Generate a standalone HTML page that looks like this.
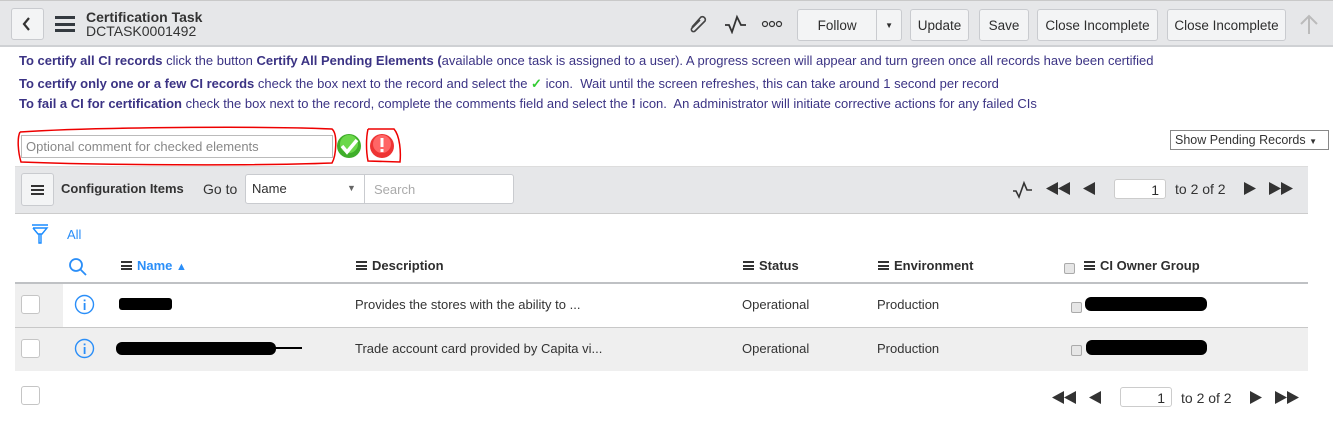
<!DOCTYPE html>
<html><head><meta charset="utf-8"><style>
*{box-sizing:border-box;margin:0;padding:0}
body{width:1333px;height:434px;background:#fff;font-family:"Liberation Sans",sans-serif;font-size:13px;color:#2e2e2e;position:relative;overflow:hidden}
.a{position:absolute;white-space:nowrap}
.btn{position:absolute;top:9px;height:32px;border:1px solid #c9cbcf;border-radius:3px;background:#f3f4f5;font-size:13.5px;color:#2e2e2e;display:flex;align-items:center;justify-content:center;white-space:nowrap}
.ins{position:absolute;left:19px;font-size:13px;color:#3b3384;white-space:nowrap}
.ins b{color:#3b3384}
.hd{position:absolute;top:258px;font-size:13px;font-weight:bold;color:#2e2e2e;white-space:nowrap}
.ham{display:inline-block;width:11px;height:9px;border-top:2px solid #333;border-bottom:2px solid #333;position:relative;margin-right:5px;vertical-align:0}
.ham:after{content:"";position:absolute;left:0;right:0;top:1.5px;border-top:2px solid #333}
.cb{position:absolute;width:19px;height:19px;border:1px solid #c5c5c5;border-radius:3px;background:#fff}
.scb{position:absolute;width:11px;height:11px;border:1px solid #aaa;border-radius:2px;background:#e6e6e6}
.scrib{position:absolute;background:#000;border-radius:6px}
.cell{position:absolute;font-size:13px;color:#333;white-space:nowrap}
</style></head><body>
<div class="a" style="left:0;top:0;width:1333px;height:47px;background:#e6e7e9;border-top:1px solid #c9c9c9;border-bottom:2px solid #cfd1d4"></div>
<div class="a" style="left:11px;top:8px;width:33px;height:32px;border:1px solid #c9cbcf;border-radius:3px;background:#f3f4f5"></div>
<svg class="a" style="left:22px;top:16px" width="10" height="16"><path d="M7 2 L2 8 L7 14" stroke="#333" stroke-width="2.2" fill="none"/></svg>
<div class="a" style="left:55px;top:16px;width:20px;height:16px;border-top:3px solid #343a40;border-bottom:3px solid #343a40"><div style="margin-top:3.5px;border-top:3px solid #343a40"></div></div>
<div class="a" style="left:86px;top:9px;font-size:14px;font-weight:bold;color:#333">Certification Task</div>
<div class="a" style="left:86px;top:23px;font-size:14px;color:#333">DCTASK0001492</div>
<svg class="a" style="left:686px;top:12px" width="24" height="24"><path d="M6 15 L15 5 a3 3 0 0 1 4 4 L9 19 a2 2 0 0 1 -3 -3 L14 8" stroke="#444" stroke-width="1.6" fill="none"/></svg>
<svg class="a" style="left:724px;top:14px" width="24" height="20"><path d="M1 11 L5 11 L8 18 L13 3 L17 11 L22 11" stroke="#333" stroke-width="1.8" fill="none"/></svg>
<svg class="a" style="left:761px;top:20px" width="22" height="8"><circle cx="4" cy="4" r="2.5" stroke="#333" stroke-width="1.2" fill="none"/><circle cx="11" cy="4" r="2.5" stroke="#333" stroke-width="1.2" fill="none"/><circle cx="18" cy="4" r="2.5" stroke="#333" stroke-width="1.2" fill="none"/></svg>
<div class="btn" style="left:797px;width:105px;justify-content:flex-start"><span style="width:79px;text-align:center">Follow</span><span style="border-left:1px solid #c9cbcf;height:30px;width:25px;display:flex;align-items:center;justify-content:center;font-size:8px">▼</span></div>
<div class="btn" style="left:910px;width:59px">Update</div>
<div class="btn" style="left:979px;width:50px">Save</div>
<div class="btn" style="left:1037px;width:121px">Close Incomplete</div>
<div class="btn" style="left:1167px;width:119px">Close Incomplete</div>
<svg class="a" style="left:1298px;top:13px" width="22" height="22"><path d="M11 21 L11 3 M3 11 L11 3 L19 11" stroke="#bbb" stroke-width="2" fill="none"/></svg>

<div class="ins" style="top:53px"><b>To certify all CI records</b> click the button <b>Certify All Pending Elements (</b>available once task is assigned to a user). A progress screen will appear and turn green once all records have been certified</div>
<div class="ins" style="top:76px"><b>To certify only one or a few CI records</b> check the box next to the record and select the <span style="color:#3c3;font-weight:bold">✓</span> icon.&nbsp; Wait until the screen refreshes, this can take around 1 second per record</div>
<div class="ins" style="top:96px"><b>To fail a CI for certification</b> check the box next to the record, complete the comments field and select the <b>!</b> icon.&nbsp; An administrator will initiate corrective actions for any failed CIs</div>

<div class="a" style="left:21px;top:135px;width:312px;height:23px;border:1px solid #bbb;font-size:13px;color:#888;padding:3px 4px">Optional comment for checked elements</div>
<svg class="a" style="left:14px;top:124px" width="325" height="42"><path d="M6 8 C80 3 250 2 318 5 C324 10 322 32 318 39 C240 42 80 41 7 38 C4 28 3 14 6 8" stroke="#e00" stroke-width="1.5" fill="none"/></svg>
<svg class="a" style="left:336px;top:133px" width="28" height="28"><circle cx="13" cy="13" r="12" fill="#3fae2a"/><circle cx="13" cy="11" r="9" fill="#6bd84a"/><path d="M6 13 L11 19 L21 7" stroke="#fff" stroke-width="3.5" fill="none"/></svg>
<svg class="a" style="left:364px;top:126px" width="45" height="38"><path d="M4 3 L30 3 C36 10 37 26 36 36 L4 35 C2 25 2 12 4 3" stroke="#e00" stroke-width="1.5" fill="none"/><circle cx="18" cy="20" r="12" fill="#e33"/><circle cx="18" cy="18" r="9" fill="#f66"/><rect x="16.5" y="12" width="3" height="9" fill="#fff"/><rect x="16.5" y="23" width="3" height="3" fill="#fff"/></svg>

<div class="a" style="left:1170px;top:130px;width:159px;height:20px;border:1px solid #888;font-size:12.5px;padding:2px 4px;color:#333;overflow:hidden">Show Pending Records <span style="font-size:8px">▼</span></div>

<div class="a" style="left:15px;top:166px;width:1293px;height:48px;background:#e6e7e9;border-top:1px solid #ddd;border-bottom:1px solid #ccc"></div>
<div class="a" style="left:21px;top:173px;width:33px;height:33px;border:1px solid #c9cbcf;border-radius:3px;background:#f3f4f5"></div>
<div class="a" style="left:31px;top:185px;width:13px;height:10px;border-top:2px solid #333;border-bottom:2px solid #333"><div style="margin-top:2px;border-top:2px solid #333"></div></div>
<div class="a" style="left:61px;top:181px;font-size:13px;font-weight:bold;color:#333">Configuration Items</div>
<div class="a" style="left:203px;top:181px;font-size:14px;color:#333">Go to</div>
<div class="a" style="left:245px;top:174px;width:269px;height:30px;border:1px solid #c9cbcf;border-radius:3px;background:#fff"></div>
<div class="a" style="left:364px;top:175px;width:1px;height:28px;background:#c9cbcf"></div>
<div class="a" style="left:252px;top:181px;font-size:13px">Name</div>
<div class="a" style="left:347px;top:183px;font-size:9px;color:#666">▼</div>
<div class="a" style="left:374px;top:182px;font-size:13px;color:#aaa">Search</div>
<svg class="a" style="left:1012px;top:180px" width="22" height="20"><path d="M1 11 L4 11 L7 17 L12 3 L15 10 L20 10" stroke="#333" stroke-width="1.6" fill="none"/></svg>
<svg class="a" style="left:1046px;top:182px" width="26" height="13"><path d="M0 6.5 L12 0 L12 13Z M12 6.5 L24 0 L24 13Z" fill="#333"/></svg>
<svg class="a" style="left:1083px;top:182px" width="13" height="13"><path d="M0 6.5 L12 0 L12 13Z" fill="#333"/></svg>
<div class="a" style="left:1114px;top:179px;width:52px;height:20px;border:1px solid #ccc;border-radius:3px;background:#fff;text-align:right;padding:2px 6px;font-size:14px">1</div>
<div class="a" style="left:1175px;top:181px;font-size:14px;color:#333">to 2 of 2</div>
<svg class="a" style="left:1244px;top:182px" width="13" height="13"><path d="M12 6.5 L0 0 L0 13Z" fill="#333"/></svg>
<svg class="a" style="left:1269px;top:182px" width="26" height="13"><path d="M12 6.5 L0 0 L0 13Z M24 6.5 L12 0 L12 13Z" fill="#333"/></svg>

<svg class="a" style="left:31px;top:223px" width="18" height="22"><path d="M1 2 L17 2 M2 5 L16 5 L11 11 L7 11 L2 5 M8 11 L8 20 L10 20 L10 11" stroke="#1a8cff" stroke-width="1.4" fill="none"/></svg>
<div class="a" style="left:67px;top:227px;font-size:13px;color:#2a8ef8">All</div>

<svg class="a" style="left:68px;top:257px" width="20" height="20"><circle cx="8" cy="8" r="6" stroke="#2a8ef8" stroke-width="1.8" fill="none"/><path d="M12 12 L18 18" stroke="#2a8ef8" stroke-width="1.8"/></svg>
<div class="hd" style="left:121px;color:#2a8ef8"><span class="ham"></span>Name <span style="font-size:11px">▲</span></div>
<div class="hd" style="left:356px"><span class="ham"></span>Description</div>
<div class="hd" style="left:743px"><span class="ham"></span>Status</div>
<div class="hd" style="left:878px"><span class="ham"></span>Environment</div>
<div class="scb" style="left:1064px;top:263px"></div>
<div class="hd" style="left:1084px"><span class="ham"></span>CI Owner Group</div>
<div class="a" style="left:15px;top:282px;width:1293px;height:2px;background:#bfc1c4"></div>

<div class="a" style="left:15px;top:284px;width:48px;height:43px;background:#efefef"></div>
<div class="a" style="left:15px;top:327px;width:1293px;height:1px;background:#c8c8c8"></div>
<div class="a" style="left:15px;top:328px;width:1293px;height:43px;background:#efefef"></div>
<div class="cb" style="left:21px;top:295px"></div>
<div class="cb" style="left:21px;top:339px"></div>
<svg class="a" style="left:74px;top:294px" width="21" height="21"><circle cx="10.5" cy="10.5" r="9" stroke="#2a8ef8" stroke-width="1.4" fill="none"/><rect x="9.7" y="9" width="1.8" height="7" fill="#2a8ef8"/><rect x="9.7" y="5.5" width="1.8" height="1.8" fill="#2a8ef8"/></svg>
<svg class="a" style="left:74px;top:338px" width="21" height="21"><circle cx="10.5" cy="10.5" r="9" stroke="#2a8ef8" stroke-width="1.4" fill="none"/><rect x="9.7" y="9" width="1.8" height="7" fill="#2a8ef8"/><rect x="9.7" y="5.5" width="1.8" height="1.8" fill="#2a8ef8"/></svg>
<div class="scrib" style="left:119px;top:298px;width:53px;height:12px;border-radius:3px"></div>
<div class="scrib" style="left:116px;top:342px;width:160px;height:13px"></div>
<div class="a" style="left:270px;top:347px;width:32px;height:2px;background:#000"></div>
<div class="cell" style="left:355px;top:297px">Provides the stores with the ability to ...</div>
<div class="cell" style="left:355px;top:341px">Trade account card provided by Capita vi...</div>
<div class="cell" style="left:742px;top:297px">Operational</div>
<div class="cell" style="left:742px;top:341px">Operational</div>
<div class="cell" style="left:877px;top:297px">Production</div>
<div class="cell" style="left:877px;top:341px">Production</div>
<div class="scb" style="left:1071px;top:302px"></div>
<div class="scb" style="left:1071px;top:345px"></div>
<div class="scrib" style="left:1085px;top:297px;width:122px;height:14px"></div>
<div class="scrib" style="left:1086px;top:340px;width:121px;height:15px"></div>

<div class="cb" style="left:21px;top:386px"></div>
<svg class="a" style="left:1052px;top:391px" width="26" height="13"><path d="M0 6.5 L12 0 L12 13Z M12 6.5 L24 0 L24 13Z" fill="#333"/></svg>
<svg class="a" style="left:1089px;top:391px" width="13" height="13"><path d="M0 6.5 L12 0 L12 13Z" fill="#333"/></svg>
<div class="a" style="left:1120px;top:387px;width:52px;height:20px;border:1px solid #ccc;border-radius:3px;background:#fff;text-align:right;padding:2px 6px;font-size:14px">1</div>
<div class="a" style="left:1181px;top:390px;font-size:14px;color:#333">to 2 of 2</div>
<svg class="a" style="left:1250px;top:391px" width="13" height="13"><path d="M12 6.5 L0 0 L0 13Z" fill="#333"/></svg>
<svg class="a" style="left:1275px;top:391px" width="26" height="13"><path d="M12 6.5 L0 0 L0 13Z M24 6.5 L12 0 L12 13Z" fill="#333"/></svg>
</body></html>
